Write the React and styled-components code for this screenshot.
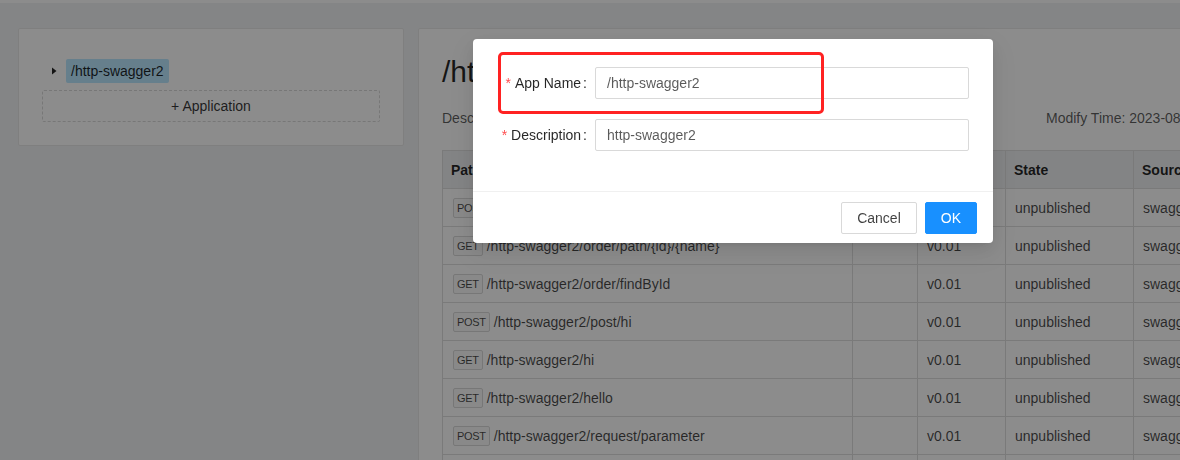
import React from "react";
import styled, { createGlobalStyle } from "styled-components";

const GlobalStyle = createGlobalStyle`
  html, body {
    margin: 0;
    padding: 0;
    background: #f0f2f5;
    font-family: "Liberation Sans", Arial, sans-serif;
    font-size: 14px;
    color: rgba(0, 0, 0, 0.85);
  }
  * { box-sizing: border-box; }
`;

const Page = styled.div`
  width: 1180px;
  height: 460px;
  overflow: hidden;
`;

const Header = styled.div`
  height: 3px;
  background: #fff;
`;

const Content = styled.div`
  display: flex;
  align-items: flex-start;
  gap: 14px;
  padding: 25px 18px;
`;

const Card = styled.div`
  flex: none;
  width: ${(p) => p.$width}px;
  background: #fff;
  border: 1px solid #e8e8e8;
  border-radius: 2px;
  padding: 23px;
`;

const TreeRow = styled.div`
  display: flex;
  align-items: center;
  height: 24px;
  margin: 7px 0 7px;
`;

const Switcher = styled.span`
  width: 24px;
  height: 24px;
  display: flex;
  align-items: center;
  justify-content: center;
  color: rgba(0, 0, 0, 0.85);
`;

const TreeTitle = styled.span`
  height: 24px;
  line-height: 24px;
  padding: 0 5px;
  border-radius: 2px;
  background: ${(p) => (p.$selected ? "#bae7ff" : "transparent")};
`;

const DashedButton = styled.button`
  display: block;
  width: 100%;
  height: 32px;
  border: 1px dashed #d9d9d9;
  border-radius: 2px;
  background: #fff;
  font: inherit;
  color: rgba(0, 0, 0, 0.8);
`;

const Title = styled.h2`
  margin: 0 0 15px;
  font-size: 30px;
  font-weight: 500;
  line-height: 40px;
`;

const Meta = styled.div`
  display: grid;
  grid-template-columns: repeat(3, 1fr);
  line-height: 22px;
  margin-bottom: 21px;
  color: rgba(0, 0, 0, 0.65);
`;

const Table = styled.table`
  width: 100%;
  border-collapse: collapse;
  table-layout: fixed;
  border: 1px solid #dfdfdf;
`;

const Th = styled.th`
  width: ${(p) => (p.$w ? `${p.$w}px` : "auto")};
  height: 38px;
  padding: 0 8px;
  text-align: left;
  font-weight: 600;
  background: #eff0f2;
  border: 1px solid #dfdfdf;
  white-space: nowrap;
  overflow: hidden;
`;

const Td = styled.td`
  height: 38px;
  padding: 0 9px;
  border: 1px solid #dfdfdf;
  white-space: nowrap;
  overflow: hidden;
  color: rgba(0, 0, 0, 0.72);
`;

const MethodTag = styled.span`
  display: inline-block;
  margin: 0 4px 0 1px;
  padding: 0 3px;
  line-height: 18px;
  font-size: 11px;
  letter-spacing: -0.3px;
  border: 1px solid #d9d9d9;
  border-radius: 2px;
  background: #fafafa;
  color: rgba(0, 0, 0, 0.72);
  vertical-align: 1px;
`;

const Mask = styled.div`
  position: fixed;
  inset: 0;
  background: rgba(0, 0, 0, 0.45);
`;

const Modal = styled.div`
  position: fixed;
  top: 39px;
  left: 473px;
  width: 520px;
  background: #fff;
  border-radius: 4px;
  box-shadow: 0 3px 6px -4px rgba(0, 0, 0, 0.12),
    0 6px 16px 0 rgba(0, 0, 0, 0.08), 0 9px 28px 8px rgba(0, 0, 0, 0.05);
`;

const ModalBody = styled.div`
  position: relative;
  padding: 28px 24px 20px;
`;

const FormItem = styled.div`
  display: flex;
  align-items: center;
  margin-bottom: 20px;
`;

const Label = styled.label`
  flex: none;
  width: 98px;
  text-align: right;
  white-space: nowrap;
  color: rgba(0, 0, 0, 0.85);
  &::before {
    content: "*";
    color: #ff4d4f;
    margin-right: 4px;
    font-family: SimSun, "Liberation Sans", sans-serif;
  }
  &::after {
    content: ":";
    margin: 0 8px 0 2px;
  }
`;

const Input = styled.input`
  flex: 1;
  height: 32px;
  padding: 4px 11px;
  border: 1px solid #d9d9d9;
  border-radius: 2px;
  font: inherit;
  color: rgba(0, 0, 0, 0.65);
  outline: none;
`;

const Highlight = styled.div`
  position: absolute;
  left: 25px;
  top: 13px;
  width: 326px;
  height: 62px;
  border: 3px solid #ff2222;
  border-radius: 5px;
  pointer-events: none;
`;

const ModalFooter = styled.div`
  display: flex;
  justify-content: flex-end;
  gap: 8px;
  padding: 10px 16px 9px;
  border-top: 1px solid #f0f0f0;
`;

const Button = styled.button`
  height: 32px;
  padding: 4px 15px;
  border-radius: 2px;
  font: inherit;
  border: 1px solid ${(p) => (p.$primary ? "#1890ff" : "#d9d9d9")};
  background: ${(p) => (p.$primary ? "#1890ff" : "#fff")};
  color: ${(p) => (p.$primary ? "#fff" : "rgba(0, 0, 0, 0.75)")};
`;

const rows = [
  ["POST", "/http-swagger2/order/save"],
  ["GET", "/http-swagger2/order/path/{id}/{name}"],
  ["GET", "/http-swagger2/order/findById"],
  ["POST", "/http-swagger2/post/hi"],
  ["GET", "/http-swagger2/hi"],
  ["GET", "/http-swagger2/hello"],
  ["POST", "/http-swagger2/request/parameter"],
  ["GET", "/http-swagger2/user/list"],
];

export default function App() {
  return (
    <>
      <GlobalStyle />
      <Page>
        <Header />
        <Content>
          <Card $width={386}>
            <TreeRow>
              <Switcher>
                <svg width="10" height="10" viewBox="0 0 10 10">
                  <path d="M3 1.5 L7.5 5 L3 8.5 Z" fill="currentColor" />
                </svg>
              </Switcher>
              <TreeTitle $selected>/http-swagger2</TreeTitle>
            </TreeRow>
            <DashedButton>+ Application</DashedButton>
          </Card>
          <Card $width={954}>
            <Title>/http-swagger2</Title>
            <Meta>
              <span>Description: http-swagger2</span>
              <span>Create Time: 2023-08-16 10:21:45</span>
              <span>Modify Time: 2023-08-16 10:21:45</span>
            </Meta>
            <Table>
              <thead>
                <tr>
                  <Th $w={410}>Path</Th>
                  <Th $w={65}>Name</Th>
                  <Th $w={88}>Version</Th>
                  <Th $w={128}>State</Th>
                  <Th>Source</Th>
                </tr>
              </thead>
              <tbody>
                {rows.map(([method, path]) => (
                  <tr key={path}>
                    <Td>
                      <MethodTag>{method}</MethodTag>
                      {path}
                    </Td>
                    <Td />
                    <Td>v0.01</Td>
                    <Td>unpublished</Td>
                    <Td>swagger</Td>
                  </tr>
                ))}
              </tbody>
            </Table>
          </Card>
        </Content>
      </Page>
      <Mask />
      <Modal>
        <ModalBody>
          <Highlight />
          <FormItem>
            <Label>App Name</Label>
            <Input defaultValue="/http-swagger2" />
          </FormItem>
          <FormItem>
            <Label>Description</Label>
            <Input defaultValue="http-swagger2" />
          </FormItem>
        </ModalBody>
        <ModalFooter>
          <Button>Cancel</Button>
          <Button $primary>OK</Button>
        </ModalFooter>
      </Modal>
    </>
  );
}
